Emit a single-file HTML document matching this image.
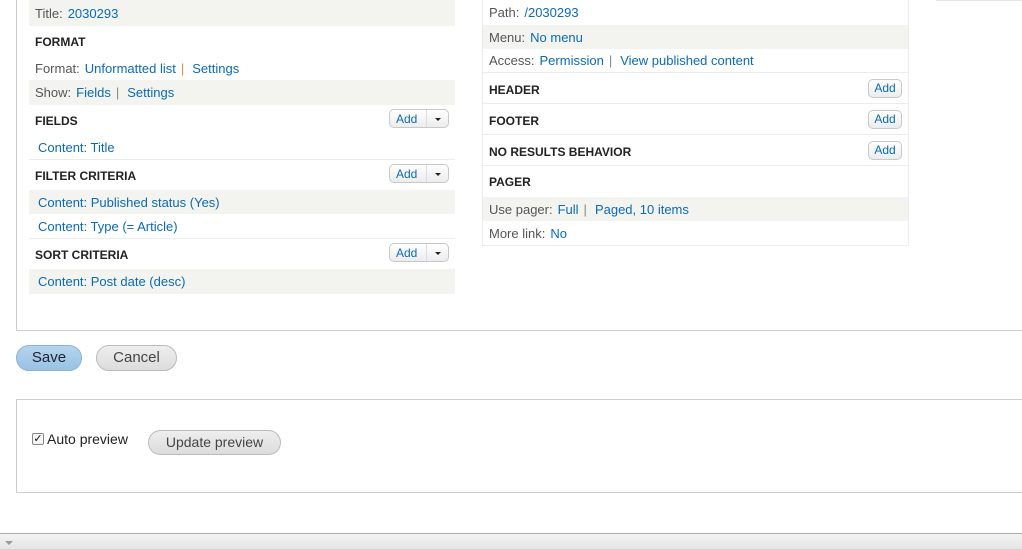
<!DOCTYPE html>
<html><head><style>
*{margin:0;padding:0;box-sizing:border-box}
body{width:1022px;height:549px;background:#fff;font-family:"Liberation Sans",sans-serif;font-size:13px;color:#333;position:relative;overflow:hidden}
a{color:#0a6ab6;text-decoration:none}
.abs{position:absolute}
.row{position:absolute;left:0;right:0;padding-left:9px;display:flex;align-items:center}
.g{background:#f3f3ef}
.h{font-weight:bold;color:#222;padding-left:6px;font-size:12px}
.lbl{color:#555;margin-right:5px}
.sep{color:#888;margin:0 8px 0 5px}
.sepo{color:#e08b3a;margin:0 8px 0 5px}
.bl{border-bottom:1px solid #ececec}
.addd{position:absolute;right:6px;top:4px;width:60px;height:19px;border:1px solid #c8c8c8;border-radius:5px;background:linear-gradient(#fff,#ececec);font-size:12px;font-weight:normal}
.addd span{position:absolute;left:6px;top:2px;color:#0a6ab6}
.addd i{position:absolute;left:36px;top:0;bottom:0;border-left:1px solid #ddd}
.addd b{position:absolute;left:45px;top:8px;border-left:3px solid transparent;border-right:3px solid transparent;border-top:3px solid #222}
.add{position:absolute;right:6px;top:6px;width:34px;height:19px;border:1px solid #c8c8c8;border-radius:5px;background:linear-gradient(#fff,#ececec);color:#0a6ab6;text-align:center;line-height:17px;font-weight:normal}
.btn{position:absolute;height:26px;border-radius:13px;border:1px solid #bbb;background:linear-gradient(#eee,#dcdcdc);font-size:15px;color:#444;text-align:center;line-height:24px}
</style></head><body>
<div class="abs" style="left:16px;top:-1px;width:1010px;height:332px;border:1px solid #ccc;border-top:none"></div>
<div class="abs" style="left:936px;top:-1px;width:90px;height:2px;border:1px solid #e6e6e6"></div>

<div class="abs" style="left:29px;top:0;width:426px;height:294px">
 <div class="row g" style="top:0;height:26px;padding-left:6px"><span class="lbl">Title:</span><a>2030293</a></div>
 <div class="row h" style="top:26px;height:31px">FORMAT</div>
 <div class="row" style="top:57px;height:23px;padding-left:6px"><span class="lbl">Format:</span><a>Unformatted list</a><span class="sepo">|</span><a>Settings</a></div>
 <div class="row g" style="top:80px;height:25px;padding-left:6px"><span class="lbl">Show:</span><a>Fields</a><span class="sep">|</span><a>Settings</a></div>
 <div class="row h" style="top:105px;height:32px">FIELDS<div class="addd"><span>Add</span><i></i><b></b></div></div>
 <div class="row bl" style="top:135px;height:25px"><a>Content: Title</a></div>
 <div class="row h" style="top:160px;height:32px">FILTER CRITERIA<div class="addd"><span>Add</span><i></i><b></b></div></div>
 <div class="row g" style="top:190px;height:24px"><a>Content: Published status (Yes)</a></div>
 <div class="row bl" style="top:214px;height:25px"><a>Content: Type (= Article)</a></div>
 <div class="row h" style="top:239px;height:32px">SORT CRITERIA<div class="addd"><span>Add</span><i></i><b></b></div></div>
 <div class="row g" style="top:269px;height:25px"><a>Content: Post date (desc)</a></div>
</div>

<div class="abs" style="left:482px;top:-1px;width:427px;height:247px;border:1px solid #ececec;border-top:none">
 <div class="row" style="top:1px;height:25px;padding-left:6px"><span class="lbl">Path:</span><a>/2030293</a></div>
 <div class="row g" style="top:26px;height:24px;padding-left:6px"><span class="lbl">Menu:</span><a>No menu</a></div>
 <div class="row bl" style="top:50px;height:24px;padding-left:6px"><span class="lbl">Access:</span><a>Permission</a><span class="sep">|</span><a>View published content</a></div>
 <div class="row h bl" style="top:74px;height:31px;padding-top:3px">HEADER<div class="add">Add</div></div>
 <div class="row h bl" style="top:105px;height:31px;padding-top:3px">FOOTER<div class="add">Add</div></div>
 <div class="row h bl" style="top:136px;height:31px;padding-top:3px">NO RESULTS BEHAVIOR<div class="add">Add</div></div>
 <div class="row h" style="top:167px;height:31px">PAGER</div>
 <div class="row g" style="top:198px;height:24px;padding-left:6px"><span class="lbl">Use pager:</span><a>Full</a><span class="sep">|</span><a>Paged, 10 items</a></div>
 <div class="row" style="top:222px;height:24px;padding-left:6px"><span class="lbl">More link:</span><a>No</a></div>
</div>

<div class="btn" style="left:16px;top:345px;width:66px;background:linear-gradient(#b4d4ee,#98c2e4);border-color:#8fb3cf;color:#223">Save</div>
<div class="btn" style="left:96px;top:345px;width:81px">Cancel</div>

<div class="abs" style="left:16px;top:399px;width:1010px;height:94px;border:1px solid #ccc"></div>
<div class="abs" style="left:32px;top:433px;width:12px;height:12px;border:1px solid #888;border-radius:2px;background:#f4f4f4;font-size:11px;line-height:10px;text-align:center;color:#111">✓</div>
<div class="abs" style="left:47px;top:431px;font-size:14px;color:#222">Auto preview</div>
<div class="btn" style="left:148px;top:430px;width:133px;height:25px;font-size:14px;line-height:23px">Update preview</div>

<div class="abs" style="left:0;top:533px;width:1022px;height:16px;border-top:1px solid #aaa;background:linear-gradient(#f4f4f4,#e4e4e4)"></div>
<div class="abs" style="left:5px;top:541px;border-left:4px solid transparent;border-right:4px solid transparent;border-top:4px solid #999"></div>
</body></html>
